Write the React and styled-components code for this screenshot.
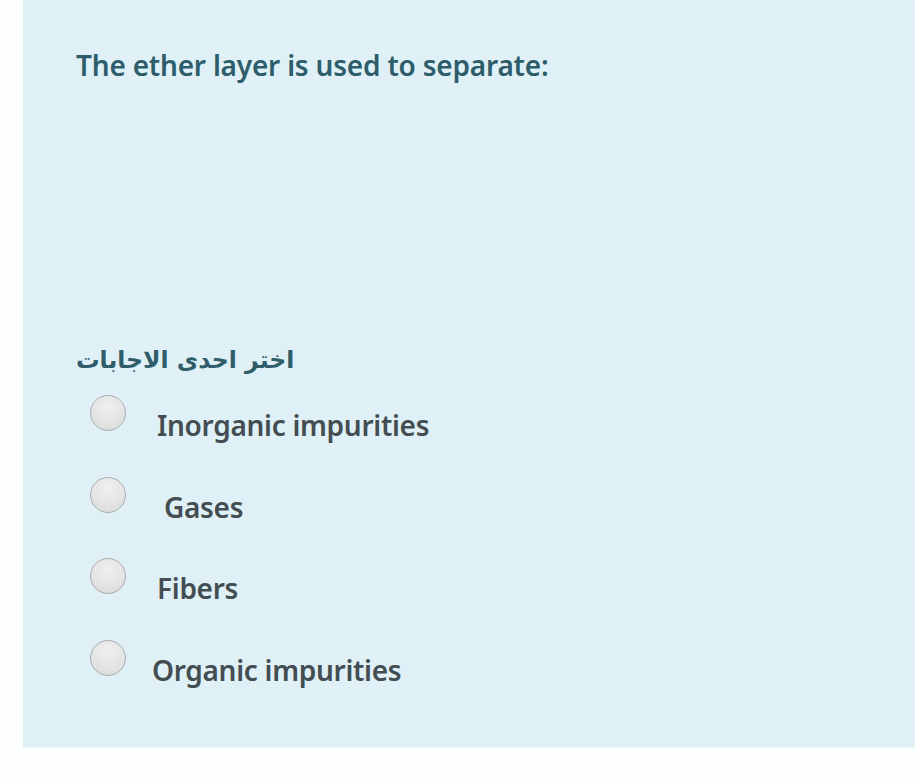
import styled, { createGlobalStyle } from "styled-components";

const GlobalStyle = createGlobalStyle`
  html, body {
    margin: 0;
    padding: 0;
    background: #ffffff;
  }
`;

const Page = styled.div`
  width: 918px;
  height: 779px;
  background: #fdfefe;
`;

const Panel = styled.div`
  margin-left: 23px;
  width: 892px;
  height: 748px;
  box-sizing: border-box;
  padding: 45px 0 0 53px;
  background: #dff1f7;
  border-right: 1px solid #e8f1f4;
  border-bottom: 1px solid #eef5f7;
  font-family: "Noto Sans", "DejaVu Sans", sans-serif;
`;

const Question = styled.h2`
  margin: 0;
  font-size: 28px;
  line-height: 40px;
  font-weight: 600;
  color: #2d5d6b;
  letter-spacing: -0.2px;
`;

const Prompt = styled.div`
  margin-top: 255px;
  direction: rtl;
  display: inline-block;
  font-family: "DejaVu Sans", "Noto Sans", sans-serif;
  font-size: 23.5px;
  line-height: 40px;
  font-weight: 600;
  color: #2f5d6a;
`;

const Options = styled.div`
  margin-top: 15px;
  display: flex;
  flex-direction: column;
  gap: 33.5px;
`;

const Option = styled.label`
  display: flex;
  align-items: flex-start;
  cursor: pointer;
`;

const Radio = styled.span`
  flex: none;
  margin-left: 14px;
  width: 34px;
  height: 34px;
  border-radius: 50%;
  border: 1px solid #a9adae;
  background: radial-gradient(circle at 50% 30%, #f0f0f0 0%, #e4e4e4 55%, #d6d6d6 100%);
`;

const Label = styled.span`
  margin-top: 12px;
  margin-left: ${(p) => p.$offset}px;
  font-size: 28px;
  line-height: 36px;
  font-weight: 600;
  color: #434d52;
  letter-spacing: -0.3px;
`;

const answers = [
  { text: "Inorganic impurities", offset: 31 },
  { text: "Gases", offset: 38 },
  { text: "Fibers", offset: 31 },
  { text: "Organic impurities", offset: 26 },
];

export default function App() {
  return (
    <Page>
      <GlobalStyle />
      <Panel>
        <Question>The ether layer is used to separate:</Question>
        <Prompt>اختر احدى الاجابات</Prompt>
        <Options>
          {answers.map((a) => (
            <Option key={a.text}>
              <Radio />
              <Label $offset={a.offset}>{a.text}</Label>
            </Option>
          ))}
        </Options>
      </Panel>
    </Page>
  );
}
